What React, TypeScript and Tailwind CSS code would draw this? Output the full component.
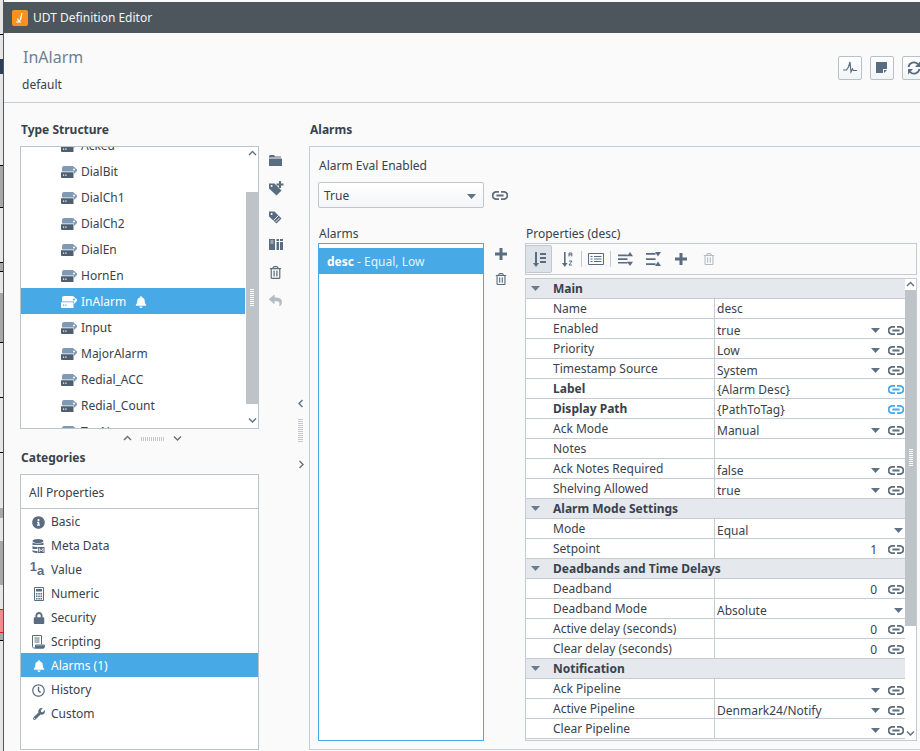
import React from 'react';
import { FaBell, FaInfoCircle, FaLock, FaRegClock, FaRegTrashAlt, FaReply, FaWrench } from 'react-icons/fa';

const SLATE = '#5a6d80';

const Caret = ({ color = '#5f7183' }: { color?: string }) => (
  <svg width="9" height="5" viewBox="0 0 9 5" className="shrink-0">
    <path d="M0 0h9L4.500 5z" fill={color} />
  </svg>
);

const Chevron = ({ dir }: { dir: 'up' | 'down' | 'left' | 'right' }) => {
  const d = {
    up: 'M1 5l3.500-3.500L8 5',
    down: 'M1 1.500L4.500 5 8 1.500',
    left: 'M5.500 1L2 4.500 5.500 8',
    right: 'M2.500 1L6 4.500 2.500 8',
  }[dir];
  const vertical = dir === 'up' || dir === 'down';
  return (
    <svg width={vertical ? 9 : 8} height={vertical ? 7 : 9} viewBox={vertical ? '0 0 9 7' : '0 0 8 9'} className="shrink-0">
      <path d={d} fill="none" stroke="#5f7183" strokeWidth="1.400" />
    </svg>
  );
};

const LinkIcon = ({ color = '#5f6e7c' }: { color?: string }) => (
  <svg width="16" height="9" viewBox="0 0 16 9" className="shrink-0">
    <path d="M7 .9H4.200a3.600 3.600 0 000 7.200H7M9 .9h2.800a3.600 3.600 0 010 7.200H9M4.400 4.500h7.200" fill="none" stroke={color} strokeWidth="1.900" />
  </svg>
);

const TagIcon = ({ selected }: { selected?: boolean }) => (
  <svg width="16" height="12" viewBox="0 0 16 12" className="shrink-0">
    <path d="M3 0h9l4 3.500v1.500l-3 3V5.500H1V2a2 2 0 012-2z" fill={selected ? '#ffffff' : '#7f9ab5'} />
    <circle cx="13" cy="3.600" r="1" fill={selected ? '#47a9e6' : '#ffffff'} />
    <path d="M0 6.200h12.500V12H1a1 1 0 01-1-1z" fill={selected ? '#ffffff' : '#4e5f6f'} />
    <path d="M2 8.500h1.200v1.200H2zM4.300 8.500h1.200v1.200H4.300z" fill={selected ? '#47a9e6' : '#ffffff'} />
  </svg>
);

const Grip = () => (
  <div className="w-[4px] h-[17px] bg-[repeating-linear-gradient(to_bottom,#ffffff_0,#ffffff_1px,transparent_1px,transparent_2px)]" />
);

const treeRows = ['Acked', 'DialBit', 'DialCh1', 'DialCh2', 'DialEn', 'HornEn', 'InAlarm', 'Input', 'MajorAlarm', 'Redial_ACC', 'Redial_Count', 'TagName'];

const MetaIcon = () => (
  <svg width="12" height="14" viewBox="0 0 12 14" className="w-[13px] h-[14px]">
    <ellipse cx="5.500" cy="2" rx="5.500" ry="2" fill={SLATE} />
    <path d="M0 3.500c2 1.400 9 1.400 11 0V6H0zM0 7c1 .7 3 1 5 1v2H0zM0 11c1 .7 3 1 5 1v2c-2 0-5-.6-5-1.500z" fill={SLATE} />
    <path d="M5.500 8H12v6H5.500z" fill={SLATE} />
    <path d="M6.800 13V9.500L8.700 12l1.900-2.500V13" fill="none" stroke="#ffffff" strokeWidth=".8" />
  </svg>
);

const CalcIcon = () => (
  <svg width="10" height="14" viewBox="0 0 10 14">
    <path d="M.5.500h9v13h-9z" fill="none" stroke={SLATE} />
    <path d="M2 2h6v2.500H2zM2 6h1.500v1.500H2zM4.300 6h1.500v1.500H4.300zM6.500 6H8v1.500H6.500zM2 8.500h1.500V10H2zM4.300 8.500h1.500V10H4.300zM6.500 8.500H8V10H6.500zM2 11h1.500v1.500H2zM4.300 11h1.500v1.500H4.300zM6.500 11H8v1.500H6.500z" fill={SLATE} />
  </svg>
);

const ScrollIcon = () => (
  <svg width="13" height="14" viewBox="0 0 13 14">
    <path d="M.5.500h9v9" fill="none" stroke={SLATE} />
    <path d="M.5.500v11c0 1 .5 1.500 1.500 1.500h9c1 0 1.500-.5 1.500-1.500V10H3.500v3" fill="none" stroke={SLATE} />
    <path d="M3.500 10.500h9v1.500c0 .7-.5 1.500-1.500 1.500H3z" fill={SLATE} />
    <path d="M2.500 3h5M2.500 5h5M2.500 7h5" stroke={SLATE} />
  </svg>
);

const ActionTag = ({ plus, stripes }: { plus?: boolean; stripes?: boolean }) => (
  <svg width="16" height="15" viewBox="0 0 16 15">
    <path d="M1 2.500h5.500l7 7-5 5-7.500-7z" fill={SLATE} />
    <circle cx="3.600" cy="5" r="1" fill="#fafafa" />
    {stripes && <path d="M5.500 11.500l5-5M7.500 13l4-4" stroke="#fafafa" strokeWidth=".9" />}
    {plus && <path d="M11 0h2v2.500h2.500v2H13V7h-2V4.500H8.500v-2H11z" fill={SLATE} />}
  </svg>
);

const categories: { name: string; icon: React.ReactNode }[] = [
  { name: 'Basic', icon: <FaInfoCircle size={13} color={SLATE} /> },
  { name: 'Meta Data', icon: <MetaIcon /> },
  {
    name: 'Value',
    icon: (
      <span className="flex items-start font-bold leading-none text-[#5a6d80] -ml-[3px] font-['Liberation_Sans',sans-serif]">
        <span className="text-[13px] -mt-[3px]">1</span>
        <span className="text-[13px] mt-[1px]">a</span>
      </span>
    ),
  },
  { name: 'Numeric', icon: <CalcIcon /> },
  { name: 'Security', icon: <FaLock size={12} color={SLATE} /> },
  { name: 'Scripting', icon: <ScrollIcon /> },
  { name: 'Alarms (1)', icon: <FaBell size={12} color="#ffffff" /> },
  { name: 'History', icon: <FaRegClock size={13} color={SLATE} /> },
  { name: 'Custom', icon: <FaWrench size={12} color={SLATE} /> },
];

type Row =
  | { kind: 'head'; label: string }
  | { kind: 'text' | 'drop' | 'num' | 'bound' | 'mode' | 'bare'; label: string; value?: string; bold?: boolean };

const rows: Row[] = [
  { kind: 'head', label: 'Main' },
  { kind: 'text', label: 'Name', value: 'desc' },
  { kind: 'drop', label: 'Enabled', value: 'true' },
  { kind: 'drop', label: 'Priority', value: 'Low' },
  { kind: 'drop', label: 'Timestamp Source', value: 'System' },
  { kind: 'bound', label: 'Label', value: '{Alarm Desc}', bold: true },
  { kind: 'bound', label: 'Display Path', value: '{PathToTag}', bold: true },
  { kind: 'drop', label: 'Ack Mode', value: 'Manual' },
  { kind: 'bare', label: 'Notes' },
  { kind: 'drop', label: 'Ack Notes Required', value: 'false' },
  { kind: 'drop', label: 'Shelving Allowed', value: 'true' },
  { kind: 'head', label: 'Alarm Mode Settings' },
  { kind: 'mode', label: 'Mode', value: 'Equal' },
  { kind: 'num', label: 'Setpoint', value: '1' },
  { kind: 'head', label: 'Deadbands and Time Delays' },
  { kind: 'num', label: 'Deadband', value: '0' },
  { kind: 'mode', label: 'Deadband Mode', value: 'Absolute' },
  { kind: 'num', label: 'Active delay (seconds)', value: '0' },
  { kind: 'num', label: 'Clear delay (seconds)', value: '0' },
  { kind: 'head', label: 'Notification' },
  { kind: 'drop', label: 'Ack Pipeline' },
  { kind: 'drop', label: 'Active Pipeline', value: 'Denmark24/Notify' },
  { kind: 'drop', label: 'Clear Pipeline' },
];

const PropRow = ({ row }: { row: Row }) => {
  if (row.kind === 'head') {
    return (
      <div className="h-[20px] flex items-center bg-[#e5e8ec] border-b border-[#c5cbd0] shrink-0">
        <div className="w-[27px] pl-[5px] flex items-center">
          <Caret color="#6b7b8b" />
        </div>
        <span className="font-bold">{row.label}</span>
      </div>
    );
  }
  // dropdown values sit a little lower than the plain ones
  const lowered = row.kind === 'drop' || row.kind === 'mode';
  const nudged = row.kind === 'num' || row.kind === 'bound';
  return (
    <div className="h-[20px] flex bg-white border-b border-[#c5cbd0] shrink-0">
      <div className={`w-[189px] pl-[27px] border-r border-[#c5cbd0] flex items-center ${row.bold ? 'font-bold' : ''}`}>
        {row.label}
      </div>
      <div className={`flex-1 min-w-0 flex items-center pl-[2px] pr-[1px] ${lowered ? 'pt-[4px]' : nudged ? 'pt-[2px]' : ''}`}>
        {row.kind === 'text' && <span>{row.value}</span>}
        {row.kind === 'bare' && <span />}
        {row.kind === 'drop' && (
          <>
            <span className="flex-1">{row.value}</span>
            <Caret />
            <span className="w-[8px]" />
            <LinkIcon />
          </>
        )}
        {row.kind === 'mode' && (
          <>
            <span className="flex-1">{row.value}</span>
            <Caret />
            <span className="w-[1px]" />
          </>
        )}
        {row.kind === 'num' && (
          <>
            <span className="flex-1 text-right pr-[11px]">{row.value}</span>
            <LinkIcon />
          </>
        )}
        {row.kind === 'bound' && (
          <>
            <span className="flex-1">{row.value}</span>
            <LinkIcon color="#47a9e6" />
          </>
        )}
      </div>
    </div>
  );
};

const ToolSep = () => <div className="w-px h-[16px] bg-[#c2c8cd] shrink-0" />;

const PropsToolbar = () => (
  <div className="h-[32px] border border-[#c5cbd0] flex items-center shrink-0">
    <div className="w-[27px] h-[28px] -ml-px bg-[#dde3e9] border border-[#c2c8cd] rounded-[2px] flex items-center justify-center shrink-0">
      <svg width="14" height="15" viewBox="0 0 14 15">
        <path d="M3 0h2v11h2l-3 4-3-4h2zM8 1h6v2H8zM8 5h6v2H8zM8 9h6v2H8z" fill={SLATE} />
      </svg>
    </div>
    <div className="w-[29px] flex justify-center shrink-0">
      <svg width="12" height="15" viewBox="0 0 12 15">
        <path d="M3 0h1.600v11h2L3.800 15 1 11h2z" fill={SLATE} />
        <path d="M8 4.500V1h2.800v3.500M8 2.800h2.800M8 9h3l-3 4h3" fill="none" stroke={SLATE} />
      </svg>
    </div>
    <ToolSep />
    <div className="w-[28px] flex justify-center shrink-0">
      <svg width="16" height="12" viewBox="0 0 16 12">
        <path d="M.5.500h15v11H.500z" fill="none" stroke={SLATE} />
        <path d="M2.500 3h2v1h-2zM6 3h7.500v1H6zM2.500 5.500h2v1h-2zM6 5.500h7.500v1H6zM2.500 8h2v1h-2zM6 8h7.500v1H6z" fill={SLATE} />
      </svg>
    </div>
    <ToolSep />
    <div className="w-[28px] flex justify-center shrink-0">
      <svg width="15" height="14" viewBox="0 0 15 14">
        <path d="M0 2.500h9.500v1.700H0zM0 6.200h9.500v1.700H0zM0 9.900h9.500v1.700H0zM12 0l3 4.200H9zM12 14l-3-4.200h6z" fill={SLATE} />
      </svg>
    </div>
    <div className="w-[28px] flex justify-center shrink-0">
      <svg width="15" height="14" viewBox="0 0 15 14">
        <path d="M0 1h9.500v1.700H0zM0 6.200h9.500v1.700H0zM0 11.300h9.500V13H0zM9 0h6l-3 4.500zM9 14h6l-3-4.500z" fill={SLATE} />
      </svg>
    </div>
    <div className="w-[28px] flex justify-center shrink-0">
      <svg width="12" height="12" viewBox="0 0 12 12">
        <path d="M4.500 0h3v4.500H12v3H7.500V12h-3V7.500H0v-3h4.500z" fill={SLATE} />
      </svg>
    </div>
    <div className="w-[28px] flex justify-center shrink-0">
      <FaRegTrashAlt size={12} color="#b4bdc5" />
    </div>
  </div>
);

export default function App() {
  return (
    <div className="w-[920px] h-[751px] flex overflow-hidden bg-white text-[12px] leading-[16px] text-[#38424c] font-['Noto_Sans',sans-serif]">
      {/* whatever sits behind the dialog */}
      <div className="w-[3px] h-full shrink-0 flex flex-col bg-[#e6e6e6]">
        <div className="h-[35px] border-b border-black shrink-0" />
        <div className="h-[24px] shrink-0" />
        <div className="h-[15px] bg-[#2c3f57] shrink-0" />
        <div className="h-[92px] border-b border-black shrink-0" />
        <div className="h-[42px] bg-[#a8a8a8] border-b border-black shrink-0" />
        <div className="h-[55px] border-b border-black shrink-0" />
        <div className="h-[9px] bg-[#a8a8a8] border-b border-black shrink-0" />
        <div className="h-[21px] shrink-0" />
        <div className="h-[50px] bg-[#a8a8a8] border-b border-black shrink-0" />
        <div className="h-[55px] border-b border-black shrink-0" />
        <div className="h-[55px] border-b border-black shrink-0" />
        <div className="h-[55px] shrink-0" />
        <div className="h-[10px] bg-[#a8a8a8] shrink-0" />
        <div className="h-[23px] shrink-0" />
        <div className="h-[44px] bg-[#a8a8a8] shrink-0" />
        <div className="h-[24px] shrink-0" />
        <div className="h-[24px] bg-[#f58a8a] border-y border-[#e8151b] shrink-0" />
        <div className="h-[7px] bg-[#a8a8a8] shrink-0" />
        <div className="h-[44px] border-t border-black shrink-0" />
      </div>

      <div className="flex-1 min-w-0 flex flex-col border-l border-[#50585e] bg-[#fafafa] pt-[2px]">
        {/* title bar */}
        <div className="h-[31px] bg-[#4d565c] -ml-px flex items-center pl-[9px] gap-[5px] shrink-0">
          <div className="w-[16px] h-[16px] rounded-[2px] bg-[#f7921e] flex items-center justify-center">
            <svg width="10" height="11" viewBox="0 0 10 11">
              <path d="M7 1L5.500 7.500M2.500 6.500L4 9.500 5.500 7.500M1 10h5" fill="none" stroke="#ffffff" strokeWidth="1.200" />
            </svg>
          </div>
          <span className="text-[#f2f5f7]">UDT Definition Editor</span>
        </div>

        {/* header */}
        <div className="h-[70px] border-b border-[#c5cbd0] flex justify-between pl-[19px] shrink-0">
          <div className="flex flex-col pt-[13px]">
            <span className="text-[16px] leading-[22px] text-[#6f8091]">InAlarm</span>
            <span className="mt-[9px] -ml-px text-[12px]">default</span>
          </div>
          <div className="flex gap-[8px] pt-[23px] -mr-[6px]">
            <div className="w-[24px] h-[24px] border border-[#b9c1c8] rounded-[2px] bg-gradient-to-b from-white to-[#f2f5f7] flex items-center justify-center">
              <svg width="14" height="14" viewBox="0 0 14 14">
                <path d="M0 9h3.500L5.500 6 7 1l1 10 1.500-3 1 1.500H14" fill="none" stroke={SLATE} strokeWidth="1.200" />
              </svg>
            </div>
            <div className="w-[24px] h-[24px] border border-[#b9c1c8] rounded-[2px] bg-gradient-to-b from-white to-[#f2f5f7] flex items-center justify-center">
              <svg width="12" height="12" viewBox="0 0 12 12">
                <path d="M0 0h11v7H7v4H0zM8 8h3l-3 3z" fill={SLATE} />
              </svg>
            </div>
            <div className="w-[24px] h-[24px] border border-[#b9c1c8] rounded-[2px] bg-gradient-to-b from-white to-[#f2f5f7] flex items-center justify-center">
              <svg width="14" height="14" viewBox="0 0 14 14">
                <path d="M1.500 6A5.500 5.500 0 0111 3.200M12.500 8A5.500 5.500 0 013 10.800" fill="none" stroke={SLATE} strokeWidth="1.800" />
                <path d="M13 .5V6H8zM1 13.500V8h5z" fill={SLATE} />
              </svg>
            </div>
          </div>
        </div>

        {/* body */}
        <div className="flex-1 min-h-0 flex pl-[16px]">
          {/* left column */}
          <div className="w-[239px] shrink-0 flex flex-col">
            <div className="h-[43px] pt-[19px] pl-px font-bold shrink-0">Type Structure</div>
            <div className="h-[283px] border border-[#bcc4cb] bg-white flex overflow-hidden shrink-0">
              <div className="w-[224px] shrink-0 -mt-[15px]">
                {treeRows.map(name => {
                  const selected = name === 'InAlarm';
                  return (
                    <div
                      key={name}
                      className={`h-[26px] pl-[40px] pt-[2px] flex items-center gap-[4px] ${selected ? 'bg-[#47a9e6] text-white' : ''}`}
                    >
                      <TagIcon selected={selected} />
                      <span>{name}</span>
                      {selected && (
                        <span className="ml-[5px]">
                          <FaBell size={12} color="#ffffff" />
                        </span>
                      )}
                    </div>
                  );
                })}
              </div>
              <div className="flex-1 flex flex-col ml-[1px] bg-white">
                <div className="h-[45px] pt-[3px] flex justify-center shrink-0">
                  <Chevron dir="up" />
                </div>
                <div className="h-[212px] bg-[#bdc3c7] flex justify-center pt-[97px] shrink-0">
                  <Grip />
                </div>
                <div className="flex-1 flex items-end justify-center pb-[4px]">
                  <Chevron dir="down" />
                </div>
              </div>
            </div>
            <div className="h-[20px] flex items-start pt-[6px] pl-[103px] gap-[9px] shrink-0">
              <Chevron dir="up" />
              <div className="w-[23px] h-[4px] mt-[2px] bg-[repeating-linear-gradient(to_right,#c2c8cd_0,#c2c8cd_1px,transparent_1px,transparent_2px)]" />
              <Chevron dir="down" />
            </div>
            <div className="h-[16px] pl-px pt-px font-bold shrink-0">Categories</div>
            <div className="h-[276px] mt-[9px] border border-[#bcc4cb] bg-white shrink-0">
              <div className="h-[34px] pl-[8px] flex items-center pt-[2px] border-b border-[#bcc4cb]">All Properties</div>
              {categories.map(c => {
                const selected = c.name === 'Alarms (1)';
                return (
                  <div
                    key={c.name}
                    className={`h-[24px] pt-[2px] flex items-center ${selected ? 'bg-[#47a9e6] text-white' : ''}`}
                  >
                    <div className="w-[30px] pl-[5px] flex justify-center">{c.icon}</div>
                    <span>{c.name}</span>
                  </div>
                );
              })}
            </div>
          </div>

          {/* tree actions */}
          <div className="w-[33px] shrink-0 pt-[43px] flex flex-col items-center">
            <div className="h-[28px] flex items-center justify-center">
              <svg width="13" height="11" viewBox="0 0 13 11">
                <path d="M1 0h4l1 1.500h6v1H0V1zM0 3.500h13V11H0z" fill={SLATE} />
              </svg>
            </div>
            <div className="h-[28px] flex items-center justify-center">
              <ActionTag plus />
            </div>
            <div className="h-[28px] flex items-center justify-center">
              <ActionTag stripes />
            </div>
            <div className="h-[28px] flex items-center justify-center">
              <svg width="14" height="11" viewBox="0 0 14 11">
                <path d="M0 0h6v11H0zM7.500 0H10v2H7.500zM11 0h3v2h-3zM7.500 3H10v8H7.500zM11 3h3v8h-3z" fill={SLATE} />
                <path d="M1.500 2h3M1.500 4h3" stroke="#ffffff" strokeWidth=".8" />
              </svg>
            </div>
            <div className="h-[28px] flex items-center justify-center">
              <FaRegTrashAlt size={13} color={SLATE} />
            </div>
            <div className="h-[28px] flex items-center justify-center">
              <FaReply size={13} color="#b4bdc5" />
            </div>
          </div>

          {/* split handle */}
          <div className="w-[17px] shrink-0 flex flex-col items-center pt-[296px]">
            <Chevron dir="left" />
            <div className="w-[5px] h-[23px] mt-[11px] bg-[repeating-linear-gradient(to_bottom,#c2c8cd_0,#c2c8cd_1px,transparent_1px,transparent_2px)]" />
            <div className="mt-[18px]">
              <Chevron dir="right" />
            </div>
          </div>

          {/* alarms panel */}
          <div className="flex-1 min-w-0 flex flex-col">
            <div className="h-[43px] pt-[19px] pl-px font-bold shrink-0">Alarms</div>
            <div className="h-[604px] border-t border-l border-b border-[#c5cbd0] pl-[8px] pt-[11px] shrink-0">
              <div className="pl-px h-[16px]">Alarm Eval Enabled</div>
              <div className="flex items-center mt-[8px] h-[26px]">
                <div className="w-[166px] h-[26px] pt-[2px] border border-[#c0c6cc] rounded-[2px] bg-gradient-to-b from-white to-[#f3f5f7] flex items-center justify-between pl-[5px] pr-[7px]">
                  <span>True</span>
                  <Caret />
                </div>
                <div className="ml-[8px]">
                  <LinkIcon />
                </div>
              </div>
              <div className="flex mt-[17px]">
                <div className="w-[166px] shrink-0">
                  <div className="h-[16px] pl-px pt-px">Alarms</div>
                  <div className="h-[498px] mt-[2px] border border-[#47a9e6] bg-white pt-[4px]">
                    <div className="h-[26px] pt-[2px] bg-[#47a9e6] text-white flex items-center pl-[8px]">
                      <span className="font-bold">desc</span>
                      <span className="text-[#e8f4fc]">&nbsp;- Equal, Low</span>
                    </div>
                  </div>
                </div>
                <div className="w-[41px] shrink-0 pt-[18px] pl-[10px]">
                  <div className="h-[22px] flex items-center justify-start pl-px">
                    <svg width="12" height="12" viewBox="0 0 12 12">
                      <path d="M4.500 0h3v4.500H12v3H7.500V12h-3V7.500H0v-3h4.500z" fill={SLATE} />
                    </svg>
                  </div>
                  <div className="h-[28px] flex items-center pl-[1px]">
                    <FaRegTrashAlt size={12} color={SLATE} />
                  </div>
                </div>
                <div className="w-[392px] shrink-0">
                  <div className="h-[16px] pl-px pt-px">Properties (desc)</div>
                  <div className="mt-[2px]">
                    <PropsToolbar />
                  </div>
                  <div className="h-[463px] mt-[3px] border border-[#c5cbd0] flex overflow-hidden">
                    <div className="w-[379px] shrink-0 flex flex-col">
                      {rows.map(r => (
                        <PropRow key={r.label} row={r} />
                      ))}
                    </div>
                    <div className="flex-1 flex flex-col bg-white">
                      <div className="h-[11px] flex justify-center pt-[2px] shrink-0">
                        <Chevron dir="up" />
                      </div>
                      <div className="h-[336px] bg-[#bdc3c7] flex justify-center pt-[159px] shrink-0">
                        <Grip />
                      </div>
                      <div className="flex-1 flex items-end justify-center pb-[3px]">
                        <Chevron dir="down" />
                      </div>
                    </div>
                  </div>
                </div>
              </div>
            </div>
          </div>
        </div>
      </div>
    </div>
  );
}
